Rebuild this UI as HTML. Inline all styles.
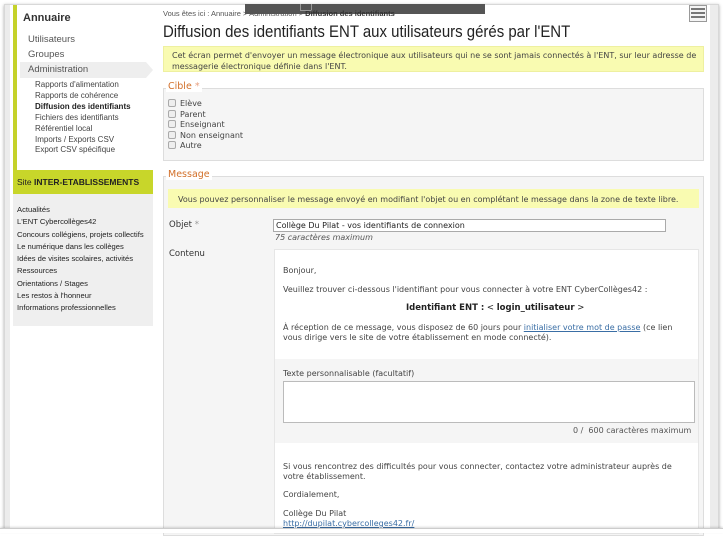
<!DOCTYPE html>
<html><head><meta charset="utf-8"><style>
*{margin:0;padding:0;box-sizing:border-box}
body{width:723px;height:533px;background:#fff;font-family:"DejaVu Sans","Liberation Sans",sans-serif;color:#333;position:relative;overflow:hidden}
.a{position:absolute;white-space:nowrap}
.frame{position:absolute;left:4px;top:4px;width:715px;height:525px;border:1px solid #d8d8d8;box-shadow:0 1px 3px rgba(0,0,0,.35);background:#fff}
.s{font-size:8px;color:#444}
.l{font-family:"Liberation Sans",sans-serif}
.cb{display:inline-block;width:8px;height:8px;border:1px solid #aaa;border-radius:2px;background:#eee;vertical-align:-1px;margin-right:4px}
</style></head><body>
<div class="frame"></div>
<div class="a" style="left:5px;top:5px;width:5px;height:523px;background:#ececec"></div>
<div class="a" style="left:710px;top:5px;width:8px;height:523px;background:#ececec"></div>
<div class="a" style="left:13px;top:5px;width:4px;height:166px;background:#c5d22a"></div>
<div class="a l" style="left:23px;top:12px;font-size:11px;font-weight:bold;color:#333">Annuaire</div>
<div class="a l" style="left:28px;top:34px;font-size:9.5px;color:#555">Utilisateurs</div>
<div class="a l" style="left:28px;top:49px;font-size:9.5px;color:#555">Groupes</div>
<div class="a" style="left:20px;top:62px;width:126px;height:16px;background:#eeeeee"></div>
<div class="a" style="left:146px;top:62px;width:0;height:0;border-top:8px solid transparent;border-bottom:8px solid transparent;border-left:7px solid #eeeeee"></div>
<div class="a l" style="left:28px;top:64px;font-size:9.5px;color:#555">Administration</div>
<div class="a l" style="left:35px;top:80px;font-size:8px;line-height:10.9px;color:#444">Rapports d'alimentation<br>Rapports de cohérence<br><b style="color:#222">Diffusion des identifiants</b><br>Fichiers des identifiants<br>Référentiel local<br>Imports / Exports CSV<br>Export CSV spécifique</div>
<div class="a" style="left:13px;top:170px;width:140px;height:24px;background:#c8d62a"></div>
<div class="a l" style="left:17px;top:177px;font-size:8.5px;color:#222">Site <b>INTER-ETABLISSEMENTS</b></div>
<div class="a" style="left:13px;top:194px;width:140px;height:132px;background:#efefef"></div>
<div class="a l" style="left:17px;top:204px;font-size:7.6px;line-height:12.3px;color:#222">Actualités<br>L'ENT Cybercollèges42<br>Concours collégiens, projets collectifs<br>Le numérique dans les collèges<br>Idées de visites scolaires, activités<br>Ressources<br>Orientations / Stages<br>Les restos à l'honneur<br>Informations professionnelles</div>
<div class="a" style="left:245px;top:4px;width:240px;height:10px;background:#555"></div>
<div class="a" style="left:300px;top:4px;width:12px;height:7px;border:1px solid #999;border-top:none"></div>
<div class="a l" style="left:163px;top:9px;font-size:7.5px;color:#555">Vous êtes ici : Annuaire &gt; Administration &gt; <b style="color:#333">Diffusion des identifiants</b></div>
<div class="a" style="left:689px;top:5px;width:18px;height:17px;border:1px solid #999;background:#f4f4f4"></div>
<div class="a" style="left:691px;top:8px;width:14px;height:2px;background:#777"></div>
<div class="a" style="left:691px;top:12px;width:14px;height:2px;background:#777"></div>
<div class="a" style="left:691px;top:16px;width:14px;height:2px;background:#777"></div>
<div class="a l" style="left:163px;top:22px;font-size:17px;color:#222;transform:scaleX(0.88);transform-origin:0 0">Diffusion des identifiants ENT aux utilisateurs gérés par l'ENT</div>
<div class="a" style="left:163px;top:46px;width:541px;height:26px;background:#f9fbb1;border:1px solid #eef0a0"></div>
<div class="a s" style="left:172px;top:50px;line-height:11px">Cet écran permet d'envoyer un message électronique aux utilisateurs qui ne se sont jamais connectés à l'ENT, sur leur adresse de<br>messagerie électronique définie dans l'ENT.</div>
<div class="a" style="left:163px;top:88px;width:541px;height:73px;background:#f5f5f5;border:1px solid #ddd"></div>
<div class="a" style="left:166px;top:81px;font-size:9.5px;color:#d2702a;background:#fff;padding:0 2px">Cible <span style="color:#e8a080">*</span></div>
<div class="a s" style="left:168px;top:99px;line-height:10.6px"><span class="cb"></span>Elève<br><span class="cb"></span>Parent<br><span class="cb"></span>Enseignant<br><span class="cb"></span>Non enseignant<br><span class="cb"></span>Autre</div>
<div class="a" style="left:163px;top:176px;width:541px;height:360px;background:#f5f5f5;border:1px solid #ddd"></div>
<div class="a" style="left:166px;top:169px;font-size:9.5px;color:#d2702a;background:#fff;padding:0 2px">Message</div>
<div class="a" style="left:168px;top:189px;width:531px;height:19px;background:#f9fbb1"></div>
<div class="a s" style="left:178px;top:195px">Vous pouvez personnaliser le message envoyé en modifiant l'objet ou en complétant le message dans la zone de texte libre.</div>
<div class="a" style="left:169px;top:220px;font-size:8.5px;color:#333">Objet <span style="color:#999">*</span></div>
<div class="a" style="left:273px;top:219px;width:393px;height:13px;background:#fff;border:1px solid #aaa"></div>
<div class="a s" style="left:276px;top:221px;color:#222">Collège Du Pilat - vos identifiants de connexion</div>
<div class="a s" style="left:275px;top:233px;font-style:italic;color:#555">75 caractères maximum</div>
<div class="a" style="left:169px;top:249px;font-size:8.5px;color:#333">Contenu</div>
<div class="a" style="left:274px;top:249px;width:425px;height:285px;background:#fff;border:1px solid #e6e6e6"></div>
<div class="a s" style="left:283px;top:266px">Bonjour,</div>
<div class="a s" style="left:283px;top:285px">Veuillez trouver ci-dessous l'identifiant pour vous connecter à votre ENT CyberCollèges42 :</div>
<div class="a" style="left:406px;top:303px;font-size:8.5px;color:#222"><b>Identifiant ENT :</b> &lt; <b>login_utilisateur</b> &gt;</div>
<div class="a s" style="left:283px;top:323px;line-height:10px">À réception de ce message, vous disposez de 60 jours pour <span style="color:#3a6ea5;text-decoration:underline">initialiser votre mot de passe</span> (ce lien<br>vous dirige vers le site de votre établissement en mode connecté).</div>
<div class="a" style="left:275px;top:359px;width:423px;height:84px;background:#f5f5f5"></div>
<div class="a s" style="left:283px;top:369px">Texte personnalisable (facultatif)</div>
<div class="a" style="left:283px;top:381px;width:412px;height:42px;background:#fff;border:1px solid #bbb"></div>
<div class="a s" style="left:573px;top:426px;color:#555">0 /&nbsp; 600 caractères maximum</div>
<div class="a s" style="left:283px;top:462px;line-height:10px">Si vous rencontrez des difficultés pour vous connecter, contactez votre administrateur auprès de<br>votre établissement.</div>
<div class="a s" style="left:283px;top:490px">Cordialement,</div>
<div class="a s" style="left:283px;top:509px;line-height:10px">Collège Du Pilat<br><span style="color:#3a6ea5;text-decoration:underline">http://dupilat.cybercolleges42.fr/</span></div>
<div class="a" style="left:0;top:528px;width:723px;height:5px;background:#fff;border-top:1px solid #ccc;box-shadow:0 -1px 2px rgba(0,0,0,.15)"></div>
</body></html>
